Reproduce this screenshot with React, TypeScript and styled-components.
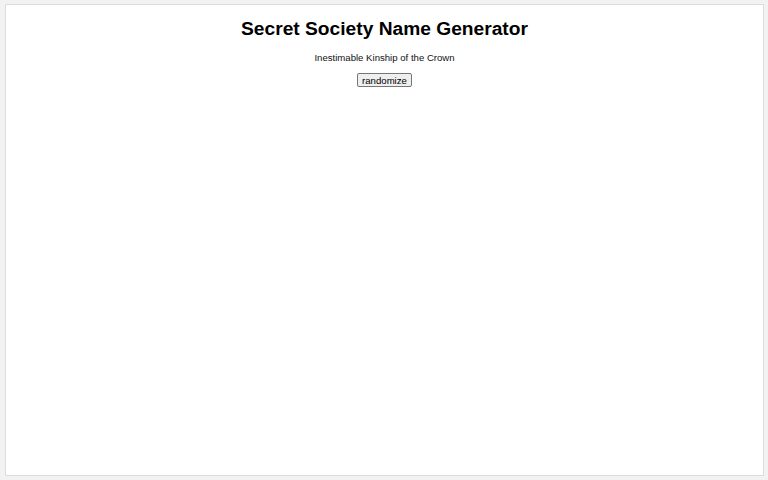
import React, { useState } from 'react';
import styled, { createGlobalStyle } from 'styled-components';

const GlobalStyle = createGlobalStyle`
  html, body {
    margin: 0;
    padding: 0;
    background: #f2f2f2;
    font-family: 'Liberation Sans', Arial, sans-serif;
  }
`;

const Page = styled.div`
  padding: 4px 4px 4px 5px;
  height: 480px;
  box-sizing: border-box;
`;

const Panel = styled.main`
  height: 100%;
  box-sizing: border-box;
  background: #fff;
  border: 1px solid #dcdcdc;
  display: flex;
  flex-direction: column;
  align-items: center;
  padding-top: 13px;
`;

const Title = styled.h1`
  margin: 0;
  font-size: 19.2px;
  font-weight: bold;
  line-height: 22px;
  color: #000;
`;

const Name = styled.p`
  margin: 12px 0 0;
  font-size: 9.6px;
  line-height: 11px;
  color: #111;
`;

const RandomButton = styled.button`
  margin-top: 10px;
  font-family: inherit;
  font-size: 9.6px;
  line-height: 11px;
  height: 14px;
  padding: 0 4.5px;
  color: #000;
  background: #efefef;
  border: 1px solid #767676;
  border-radius: 2px;
`;

const adjectives = ['Inestimable', 'Hidden', 'Ancient', 'Silent', 'Veiled', 'Gilded'];
const nouns = ['Kinship', 'Order', 'Brotherhood', 'Circle', 'Lodge', 'Fellowship'];
const things = ['the Crown', 'the Raven', 'the Lantern', 'the Serpent', 'the Eye', 'the Rose'];

const pick = (list: string[]) => list[Math.floor(Math.random() * list.length)];

export default function App() {
  const [name, setName] = useState('Inestimable Kinship of the Crown');

  const randomize = () => {
    setName(`${pick(adjectives)} ${pick(nouns)} of ${pick(things)}`);
  };

  return (
    <>
      <GlobalStyle />
      <Page>
        <Panel>
          <Title>Secret Society Name Generator</Title>
          <Name>{name}</Name>
          <RandomButton onClick={randomize}>randomize</RandomButton>
        </Panel>
      </Page>
    </>
  );
}
